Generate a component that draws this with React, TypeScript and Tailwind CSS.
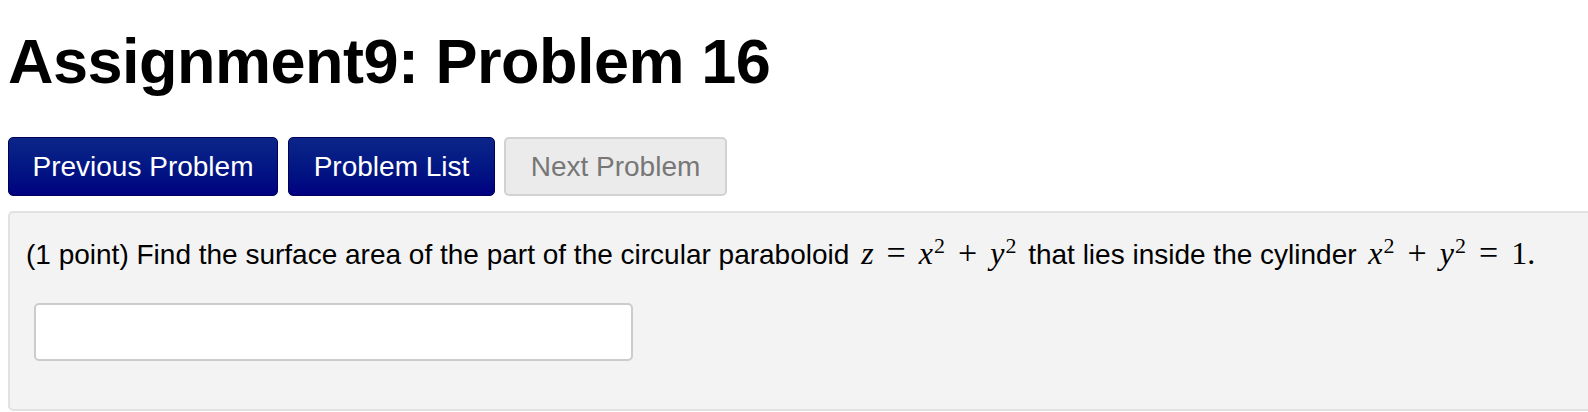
import React from 'react';

const M: React.FC<{ children: React.ReactNode }> = ({ children }) => (
  <span className="ml-[4px] mr-[4px] font-['Liberation_Serif',serif] text-[32px]">{children}</span>
);

const I: React.FC<{ children: React.ReactNode }> = ({ children }) => <i>{children}</i>;

const Sup: React.FC<{ children: React.ReactNode }> = ({ children }) => (
  <sup className="relative top-[-0.5em] ml-[1px] text-[22px]">{children}</sup>
);

const Op: React.FC<{ children: React.ReactNode }> = ({ children }) => (
  <span className="mx-[13px] text-[34px]">{children}</span>
);

export default function App() {
  return (
    <div className="w-[1588px] h-[412px] overflow-hidden bg-white font-['Liberation_Sans',Arial,sans-serif] text-black">
      <div className="pl-[8px] pt-[24px]">
        <h1 className="text-[63px] font-bold leading-[74px] tracking-[-0.5px]">Assignment9: Problem 16</h1>

        <div className="mt-[39px] flex">
          <button className="h-[59px] w-[270px] rounded-[5px] border border-[#00005a] bg-gradient-to-b from-[#0c2588] to-[#000080] text-[28px] text-white">
            Previous Problem
          </button>
          <button className="ml-[10px] h-[59px] w-[207px] rounded-[5px] border border-[#00005a] bg-gradient-to-b from-[#0c2588] to-[#000080] text-[28px] text-white">
            Problem List
          </button>
          <button className="ml-[9px] h-[59px] w-[223px] rounded-[5px] border-2 border-[#d2d2d2] bg-[#ebebeb] text-[28px] text-[#777777]">
            Next Problem
          </button>
        </div>

        <div className="mt-[15px] h-[200px] w-[1600px] rounded-l-[5px] border-2 border-[#e2e2e2] bg-[#f3f3f3] pl-[16px] pt-[22px]">
          <p className="text-[28px] leading-[36px] whitespace-nowrap">
            (1 point) Find the surface area of the part of the circular paraboloid{' '}
            <M>
              <I>z</I>
              <Op>=</Op>
              <I>x</I>
              <Sup>2</Sup>
              <Op>+</Op>
              <I>y</I>
              <Sup>2</Sup>
            </M>{' '}
            that lies inside the cylinder{' '}
            <M>
              <I>x</I>
              <Sup>2</Sup>
              <Op>+</Op>
              <I>y</I>
              <Sup>2</Sup>
              <Op>=</Op>1.
            </M>
          </p>
          <input
            type="text"
            className="ml-[8px] mt-[30px] block h-[58px] w-[599px] rounded-[5px] border-2 border-[#cccccc] bg-white outline-none"
          />
        </div>
      </div>
    </div>
  );
}
